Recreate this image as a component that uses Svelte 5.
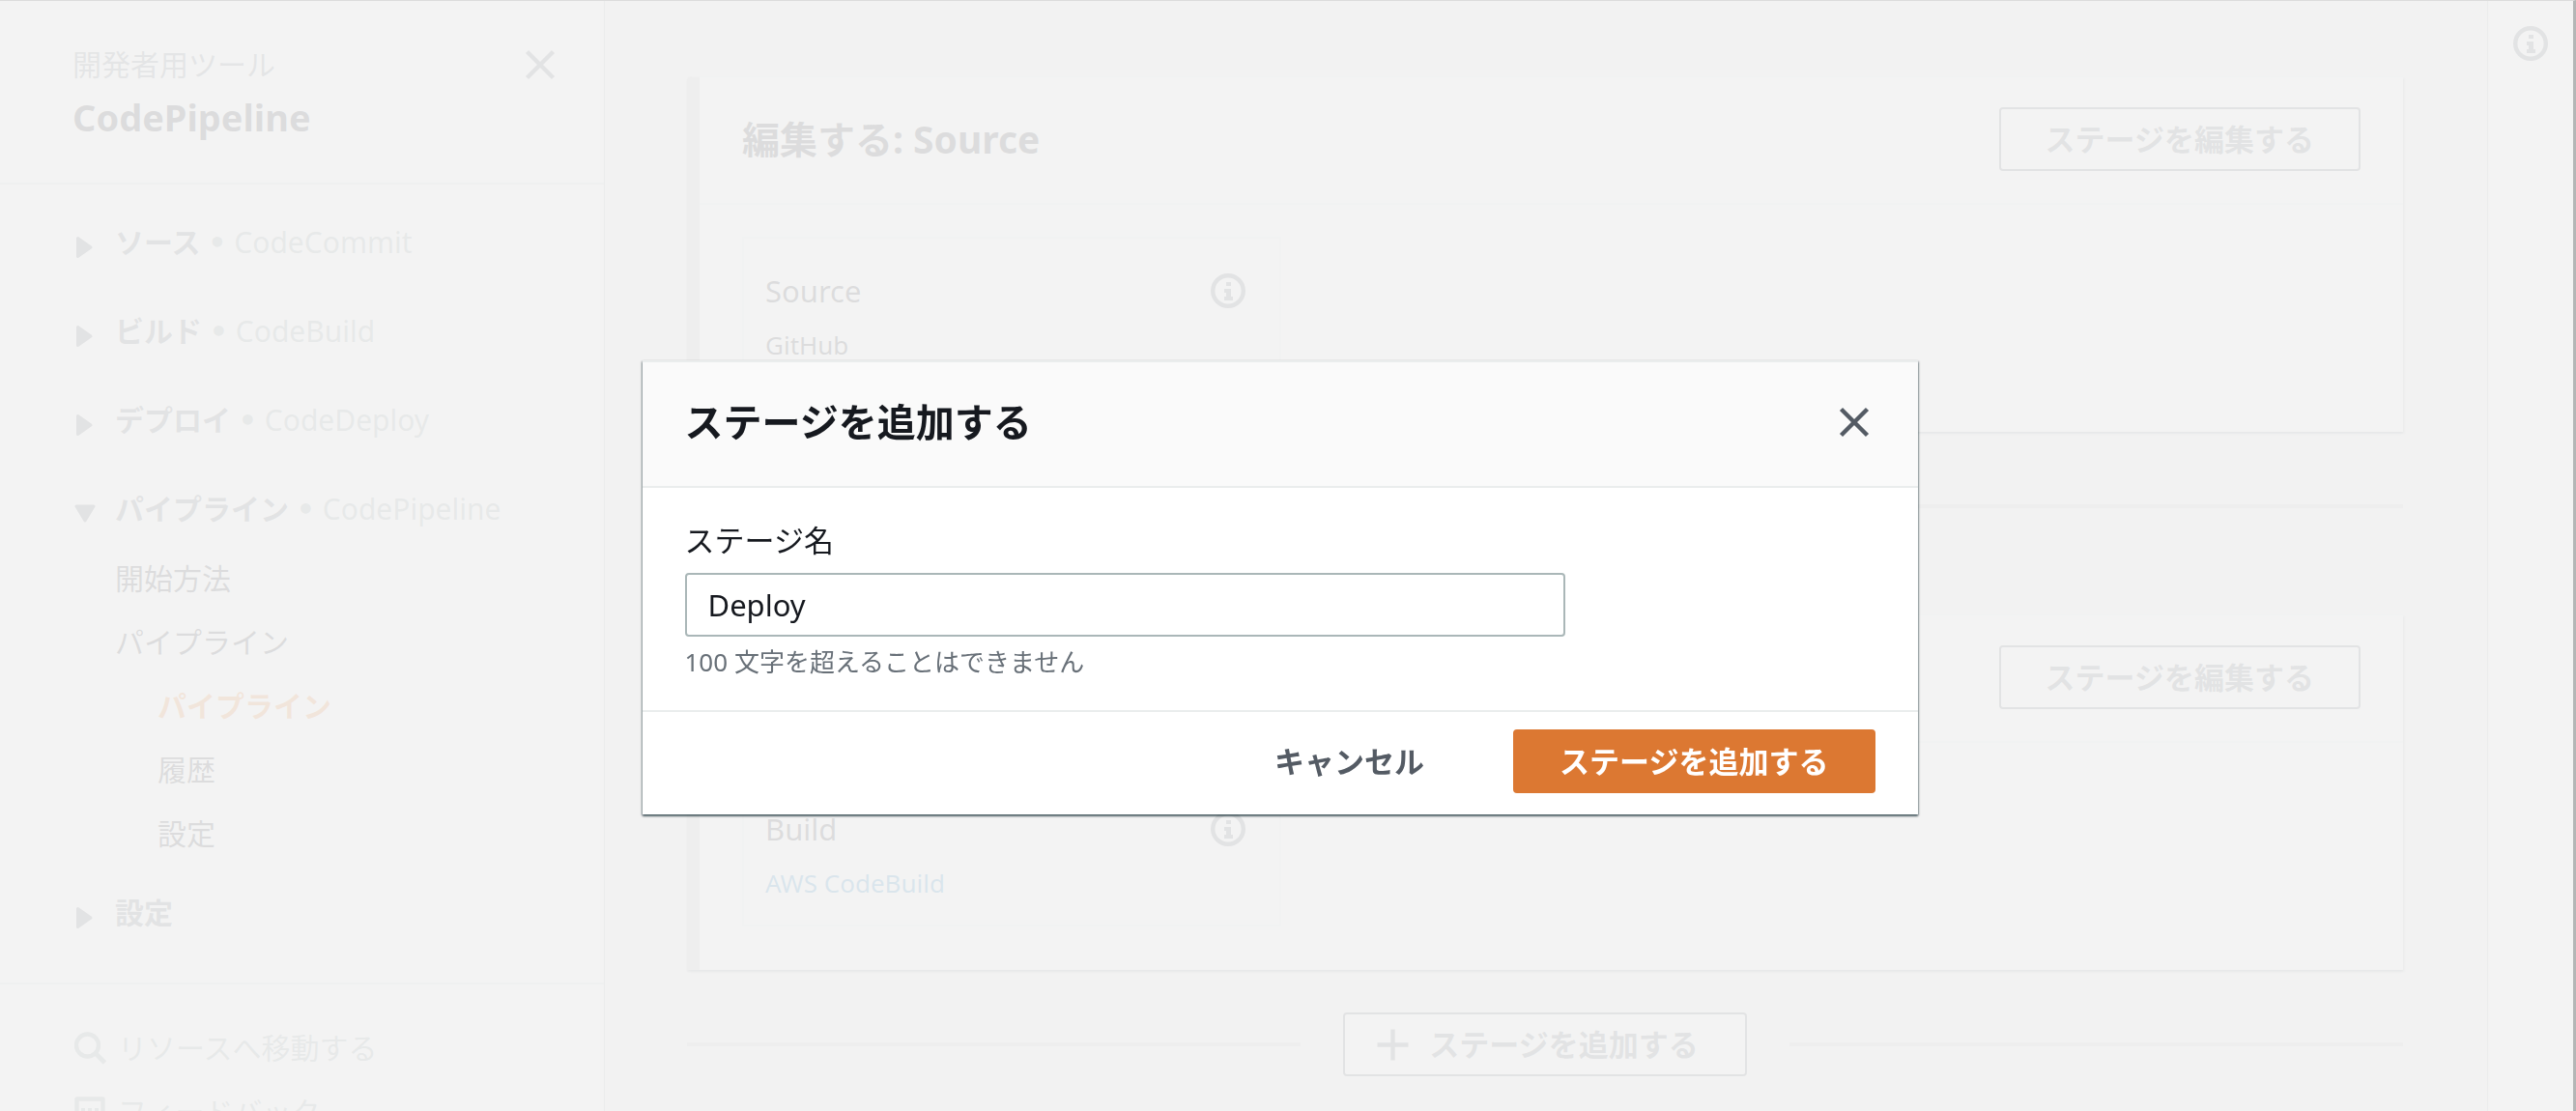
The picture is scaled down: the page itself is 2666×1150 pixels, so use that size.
<script lang="ts">
	let stageName = $state('Deploy');
	let open = $state(true);

	const services = [
		{ label: 'ソース', service: 'CodeCommit', expanded: false },
		{ label: 'ビルド', service: 'CodeBuild', expanded: false },
		{ label: 'デプロイ', service: 'CodeDeploy', expanded: false },
		{ label: 'パイプライン', service: 'CodePipeline', expanded: true },
	];

	const close = () => {
		open = false;
	};
</script>

{#snippet infoIcon()}
	<svg class="info-icon" viewBox="0 0 36 36" aria-hidden="true">
		<circle cx="18" cy="18" r="15.8" fill="none" stroke="currentColor" stroke-width="4.4" />
		<path d="M16 9h5v4h-5zM14 16h7v8h2v4h-9v-4h2v-4h-2z" fill="currentColor" />
	</svg>
{/snippet}

{#snippet closeIcon()}
	<svg class="close-icon" viewBox="0 0 32 32" aria-hidden="true">
		<path d="M2.500 2.500l27 27M29.500 2.500l-27 27" stroke="currentColor" stroke-width="4.400" />
	</svg>
{/snippet}

{#snippet caret(expanded: boolean)}
	<svg class="caret" viewBox="0 0 22 24" aria-hidden="true">
		{#if expanded}
			<path d="M2 4h18l-9 15z" fill="currentColor" stroke="currentColor" stroke-width="3" stroke-linejoin="round" />
		{:else}
			<path d="M3.500 2.500v19L17 12z" fill="currentColor" stroke="currentColor" stroke-width="3" stroke-linejoin="round" />
		{/if}
	</svg>
{/snippet}

<div class="page">
	<nav class="sidebar">
		<header class="sidebar-header">
			<div>
				<a class="parent-link" href="#tools">開発者用ツール</a>
				<h1>CodePipeline</h1>
			</div>
			<button class="icon-button" aria-label="閉じる">{@render closeIcon()}</button>
		</header>
		<div class="sidebar-body">
			<ul class="services">
				{#each services as item}
					<li>
						<button class="section">
							{@render caret(item.expanded)}
							<span>{item.label} <span class="service"><span class="bullet">•</span> {item.service}</span></span>
						</button>
						{#if item.expanded}
							<ul class="links">
								<li><a href="#start">開始方法</a></li>
								<li>
									<a href="#pipelines">パイプライン</a>
									<ul class="links nested">
										<li><a class="active" href="#pipeline">パイプライン</a></li>
										<li><a href="#history">履歴</a></li>
										<li><a href="#pipeline-settings">設定</a></li>
									</ul>
								</li>
							</ul>
						{/if}
					</li>
				{/each}
			</ul>
			<button class="section">
				{@render caret(false)}
				<span>設定</span>
			</button>
		</div>
		<div class="sidebar-footer">
			<a href="#resources">
				<svg viewBox="0 0 34 34" aria-hidden="true">
					<circle cx="13.500" cy="14" r="11.500" fill="none" stroke="currentColor" stroke-width="4.400" />
					<path d="M22 22.500l9.500 9.500" stroke="currentColor" stroke-width="4.800" />
				</svg>
				リソースへ移動する
			</a>
			<a href="#feedback">
				<svg viewBox="0 0 34 34" aria-hidden="true">
					<path d="M2.500 3.500h27v20h-14l-7 7v-7h-6z" fill="none" stroke="currentColor" stroke-width="4.400" stroke-linejoin="round" />
					<path d="M7 13h4v4H7zM14 13h4v4h-4zM21 13h4v4h-4z" fill="currentColor" />
				</svg>
				フィードバック
			</a>
		</div>
	</nav>

	<main>
		<section class="stage">
			<header class="stage-header">
				<h2>編集する: Source</h2>
				<button class="button">ステージを編集する</button>
			</header>
			<div class="stage-body">
				<div class="action">
					<div class="action-name">
						<span>Source</span>
						{@render infoIcon()}
					</div>
					<div class="provider">GitHub</div>
				</div>
			</div>
		</section>

		<hr class="divider" />

		<section class="stage">
			<header class="stage-header">
				<button class="button">ステージを編集する</button>
			</header>
			<div class="stage-body">
				<div class="action">
					<div class="action-name">
						<span>Build</span>
						{@render infoIcon()}
					</div>
					<a class="provider" href="#codebuild">AWS CodeBuild</a>
				</div>
			</div>
		</section>

		<div class="add-stage">
			<hr />
			<button class="button with-icon" onclick={() => (open = true)}>
				<svg viewBox="0 0 35 35" aria-hidden="true">
					<path d="M17.500 1.500v32M1.500 17.500h32" stroke="currentColor" stroke-width="4.400" />
				</svg>
				ステージを追加する
			</button>
			<hr />
		</div>
	</main>

	<aside>
		<button class="icon-button" aria-label="情報">{@render infoIcon()}</button>
	</aside>
</div>

{#if open}
	<div class="overlay">
		<div class="modal" role="dialog" aria-modal="true" aria-labelledby="modal-title">
			<header class="modal-header">
				<h2 id="modal-title">ステージを追加する</h2>
				<button class="icon-button" aria-label="閉じる" onclick={close}>{@render closeIcon()}</button>
			</header>
			<div class="modal-body">
				<label for="stage-name">ステージ名</label>
				<input id="stage-name" type="text" maxlength="100" aria-describedby="stage-hint" bind:value={stageName} />
				<p id="stage-hint">100 文字を超えることはできません</p>
			</div>
			<footer class="modal-footer">
				<button class="button link" onclick={close}>キャンセル</button>
				<button class="button primary" onclick={close}>ステージを追加する</button>
			</footer>
		</div>
	</div>
{/if}

<style>
	:global(body) {
		margin: 0;
		overflow: hidden;
		background: #f2f2f2;
		color: #16191f;
		font-family: "Noto Sans", "Noto Sans CJK JP", sans-serif;
		font-size: 31px;
		line-height: 48px;
	}

	h1, h2, p, ul, hr {
		margin: 0;
		padding: 0;
	}
	h1, h2 {
		font-size: 39px;
		font-weight: 700;
	}
	ul {
		list-style: none;
	}
	a {
		color: inherit;
		text-decoration: none;
	}
	button, input {
		box-sizing: border-box;
		font: inherit;
		color: inherit;
	}
	svg {
		flex: none;
	}

	.page {
		display: flex;
		box-sizing: border-box;
		height: 100vh;
		overflow: hidden;
	}

	.sidebar {
		flex: none;
		width: 625px;
		border-right: 1px solid #aab7b8;
		background: #fff;
		font-size: 30px;
	}
	.sidebar-header {
		display: flex;
		justify-content: space-between;
		align-items: flex-start;
		padding: 43px 50px 38px 75px;
		border-bottom: 2px solid #d5dbdb;
	}
	.sidebar-header h1 {
		line-height: 60px;
		font-size: 38px;
	}
	.parent-link {
		display: block;
		color: #687078;
	}
	.icon-button {
		display: flex;
		padding: 8px 0;
		border: 0;
		background: none;
		color: #545b64;
		cursor: pointer;
	}
	.close-icon {
		width: 32px;
		height: 32px;
	}
	.info-icon {
		width: 36px;
		height: 36px;
		color: #545b64;
	}

	.sidebar-body {
		padding: 36px 44px 48px 77px;
		border-bottom: 2px solid #d5dbdb;
	}
	.services {
		display: flex;
		flex-direction: column;
		gap: 44px;
		padding-bottom: 34px;
	}
	.section {
		display: flex;
		align-items: center;
		gap: 20px;
		padding: 0;
		border: 0;
		background: none;
		color: #545b64;
		font-weight: 700;
		cursor: pointer;
	}
	.caret {
		width: 22px;
		height: 24px;
		padding-top: 10px;
	}
	.service {
		color: #879596;
		font-weight: 400;
	}
	.bullet {
		font-family: "DejaVu Sans", sans-serif;
		font-weight: 700;
		line-height: 1;
	}
	.links {
		display: flex;
		flex-direction: column;
		gap: 18px;
		padding: 24px 0 0 42px;
	}
	.links a {
		display: block;
	}
	.links.nested {
		padding: 18px 0 0 44px;
	}
	.links .active {
		color: #ec7211;
		font-weight: 700;
	}
	.sidebar-footer {
		display: flex;
		flex-direction: column;
		gap: 18px;
		padding: 42px 44px 44px 77px;
		color: #879596;
	}
	.sidebar-footer a {
		display: flex;
		align-items: center;
		gap: 11px;
	}
	.sidebar-footer svg {
		width: 34px;
		height: 34px;
	}

	main {
		flex: 1;
		padding: 79px 87px 0 85px;
	}
	.stage {
		border-top: 1px solid #eaeded;
		border-left: 13px solid #ccc;
		border-radius: 4px 0 0 0;
		background: #fff;
		box-shadow: 0 2px 2px rgba(0, 28, 36, 0.3), 2px 2px 2px rgba(0, 28, 36, 0.15);
	}
	.stage-header {
		display: flex;
		align-items: center;
		padding: 31px 44px 33px;
		border-bottom: 2px solid #eaeded;
		background: #fafafa;
	}
	.stage-header .button {
		margin-left: auto;
	}
	.stage-body {
		padding: 33px 44px 45px;
	}
	.action {
		box-sizing: border-box;
		width: 558px;
		padding: 30px 35px 23px 22px;
		border: 2px solid #eaeded;
	}
	.action-name {
		display: flex;
		justify-content: space-between;
		align-items: center;
		margin-bottom: 12px;
	}
	.provider {
		display: block;
		font-size: 26px;
		line-height: 40px;
	}
	a.provider {
		color: #0073bb;
	}
	hr {
		border: 0;
		background: #c8cece;
	}
	.divider {
		height: 4px;
		margin: 75px 0 110px;
	}
	.add-stage {
		display: flex;
		align-items: center;
		gap: 44px;
		margin-top: 44px;
	}
	.add-stage hr {
		flex: 1;
		height: 4px;
	}

	aside {
		display: flex;
		justify-content: center;
		align-items: flex-start;
		flex: none;
		width: 88px;
		padding: 19px 3px 0 0;
		border-left: 1px solid #aab7b8;
		background: #fff;
	}

	.button {
		display: flex;
		align-items: center;
		justify-content: center;
		height: 66px;
		padding: 0 46px;
		border: 2px solid #545b64;
		border-radius: 4px;
		background: #fff;
		color: #545b64;
		font-weight: 700;
		white-space: nowrap;
		cursor: pointer;
	}
	.button.with-icon {
		gap: 20px;
		padding: 0 48px 0 32px;
	}
	.button.with-icon svg {
		width: 35px;
		height: 35px;
	}
	.button.link {
		border-color: transparent;
		background: none;
	}
	.button.primary {
		border-color: #dc7832;
		background: #dc7832;
		color: #fff;
	}

	.overlay {
		position: fixed;
		inset: 0;
		display: flex;
		align-items: center;
		justify-content: center;
		box-sizing: border-box;
		padding: 65px 14px 0 0;
		border-top: 1px solid #dcdcdc;
		border-right: 3px solid #b4b6b6;
		background: rgba(242, 242, 242, 0.9);
	}
	.modal {
		width: 1320px;
		max-width: 100%;
		background: #fff;
		box-shadow: 0 2px 2px rgba(0, 28, 36, 0.5), 1px 1px 2px rgba(0, 28, 36, 0.3), -1px 1px 2px rgba(0, 28, 36, 0.3);
	}
	.modal-header {
		display: flex;
		align-items: center;
		justify-content: space-between;
		padding: 38px 50px 42px 44px;
		border-top: 2px solid #eaeded;
		border-bottom: 2px solid #eaeded;
		background: #fafafa;
	}
	.modal-header h2 {
		font-size: 40px;
	}
	.modal-body {
		padding: 30px 44px;
	}
	.modal-body label {
		display: block;
		margin-bottom: 10px;
	}
	.modal-body input {
		display: block;
		width: 74%;
		height: 66px;
		padding: 0 22px;
		border: 2px solid #aab7b8;
		border-radius: 4px;
		background: #fff;
		outline: none;
	}
	.modal-body p {
		margin-top: 6px;
		color: #687078;
		font-size: 26px;
		line-height: 40px;
	}
	.modal-footer {
		display: flex;
		justify-content: flex-end;
		gap: 44px;
		padding: 18px 44px 22px;
		border-top: 2px solid #eaeded;
	}
</style>
